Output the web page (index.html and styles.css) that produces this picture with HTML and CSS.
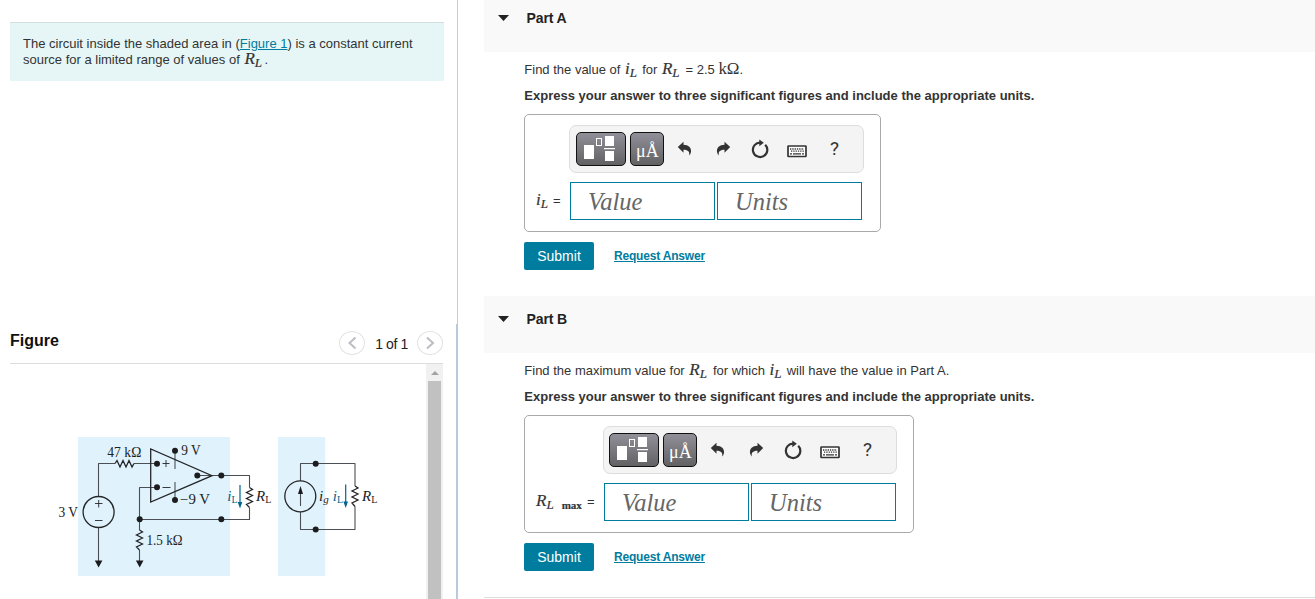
FILE: index.html
```html
<!DOCTYPE html>
<html lang="en">
<head>
<meta charset="utf-8">
<title>Constant current source</title>
<link rel="stylesheet" href="styles.css">
</head>
<body>
<div class="page">
  <aside class="left">
    <div class="intro">The circuit inside the shaded area in (<a href="#">Figure 1</a>) is a constant current<br>source for a limited range of values of <span class="math rl"><i>R</i><sub>L</sub></span>.</div>
    <div class="figure-head">
      <h2>Figure</h2>
      <div class="pager">
        <button class="round"><svg width="10" height="14" viewBox="0 0 10 14"><path d="M8.500 1.500 2.500 7l6 5.500"/></svg></button>
        <span>1 of 1</span>
        <button class="round"><svg width="10" height="14" viewBox="0 0 10 14"><path d="M2 1.500 8 7l-6 5.500"/></svg></button>
      </div>
    </div>
    <div class="figure-body">
      <svg class="circuit" width="340" height="160" viewBox="50 425 340 160">
        <path d="M78 437h152v139H78zM278 437h47.300v139H278z" fill="#e0f3fd"/>
        <g class="wire">
          <path d="M98.500 496.500V463.500H115M134 463.500H157M98.500 528v34M157 487.500H139.500V530M139.500 550V562M139.500 519.500h110V507.500M249.500 487.500V475.500H197M175 451v18M175 482v18M300.500 481V463.500H355V486M355 506.500V529.500H300.500V512M300.500 506v-14"/>
        </g>
        <g class="shape">
          <path d="M115 463.500l2-3 3 6.500 3-6.500 3 6.500 3-6.500 3 6.500 2-3.500M139.500 530l3 2-6 3 6 3-6 3 6 3-6 3 3 3M249.500 487.500l3 2-6 3 6 3-6 3 6 3-6 3 3 3M355 486l3 2-6 3 6 3-6 3 6 3-6 3 3 3.500"/>
          <path d="M150.700 449v53L212 475.700z"/><circle cx="98.600" cy="512" r="15.500"/><circle cx="300.300" cy="496.300" r="15.500"/><path d="M162.500 463.500h7M166 460v7M162.500 487.500h8M95 503.500h7.500M98.700 500v7.500M95 520.500h7.500" stroke-width=".9"/></g>
        <g fill="#1c1c1e"><circle cx="157" cy="463.700" r="3"/><circle cx="157" cy="487.300" r="3"/><circle cx="175" cy="450.700" r="3"/><circle cx="175" cy="500" r="3"/><circle cx="197.300" cy="475.600" r="3"/><circle cx="221.300" cy="475.600" r="3"/><circle cx="221.300" cy="519.300" r="3"/><circle cx="139.700" cy="519.300" r="3"/><circle cx="315.700" cy="463.700" r="3"/><circle cx="315.700" cy="529.400" r="3"/>
          <path d="M94.800 560.500h7.600l-3.800 7zM135.900 560.500h7.600l-3.800 7zM298 494h5l-2.500-8z"/></g>
        <g stroke="#00658d" fill="#00658d"><path d="M240 485v20M345.700 484.500v20" stroke-width="1.200"/><path d="M237.700 502h4.600l-2.300 6.500zM343.400 501.500h4.600l-2.300 6.500z" stroke="none"/></g>
        <g class="label">
          <text x="107.300" y="456.500" textLength="34" lengthAdjust="spacingAndGlyphs">47 kΩ</text>
          <text x="181.300" y="455" textLength="19.500" lengthAdjust="spacingAndGlyphs">9 V</text>
          <text x="180" y="504" textLength="30" lengthAdjust="spacingAndGlyphs">−9 V</text>
          <text x="58.500" y="517" textLength="19.500" lengthAdjust="spacingAndGlyphs">3 V</text>
          <text x="146.500" y="545" textLength="36" lengthAdjust="spacingAndGlyphs">1.5 kΩ</text>
          <text x="256" y="501"><tspan class="it">R</tspan><tspan class="s" dy="2">L</tspan></text>
          <text x="362" y="501"><tspan class="it">R</tspan><tspan class="s" dy="2">L</tspan></text>
          <text x="319" y="501"><tspan class="it">i</tspan><tspan class="s it-sub" dy="2">g</tspan></text>
          <g fill="#00658d"><text x="227.300" y="501"><tspan class="it">i</tspan><tspan class="s" dy="2">L</tspan></text>
          <text x="332.800" y="501"><tspan class="it">i</tspan><tspan class="s" dy="2">L</tspan></text></g>
        </g>
      </svg>
      <div class="scroll"><svg width="8" height="4" viewBox="0 0 8 4"><path d="M0 4 4 0l4 4z" fill="#a3a3a3"/></svg><div class="thumb"></div></div>
    </div>
  </aside>
  <div class="divider"><div class="upper"></div><div class="lower"></div></div>
  <main class="right">
    <section class="part part-a">
      <header><span class="caret"></span><h3>Part A</h3></header>
      <div class="content">
        <p class="question">Find the value of <span class="math il"><i>i</i><sub>L</sub></span> for <span class="math rl"><i>R</i><sub>L</sub></span> = 2.5 <span class="math ohm">kΩ</span>.</p>
        <p class="instruction">Express your answer to three significant figures and include the appropriate units.</p>
        <div class="answer">
          <div class="toolbar">
            <span class="key t1"><svg width="48" height="32" viewBox="1 1 48 32"><path d="M8 13h10v14H8zM29 4h9v10h-9zM29 19h9v10h-9zM28 16h11v1.200H28z" fill="#fff"/><rect x="20.500" y="6.500" width="5" height="7" fill="none" stroke="#fff"/></svg></span>
            <span class="key t2">μÅ</span>
            <svg class="t3" viewBox="0 0 16 16"><path d="M.8 6 6.500.8v3c5 .2 8 3 7.500 7-.2 1.500-.8 2.800-1.700 3.700.3-3.800-.8-5.700-5.800-5.800v3z" fill="#333"/></svg>
            <svg class="t4" viewBox="0 0 16 16"><path d="M.8 6 6.500.8v3c5 .2 8 3 7.500 7-.2 1.500-.8 2.800-1.700 3.700.3-3.800-.8-5.700-5.800-5.800v3z" fill="#333"/></svg>
            <svg class="t5" viewBox="0 0 18 20"><path d="M14.200 5.700A7.200 7.200 0 1 1 9.500 3.600" fill="none" stroke="#333" stroke-width="2.200"/><path d="M8.300.500 12.800 3.800 8.300 7.300z" fill="#333"/></svg>
            <svg class="t6" viewBox="0 0 20 13"><rect x="1" y="1" width="18" height="10.500" rx=".5" fill="#fff" stroke="#333" stroke-width="1.700"/><path d="M3 4h14M4 6.200h13" stroke="#333" stroke-width="1.300" stroke-dasharray="1.300 1"/><path d="M3 8.900h2m1 0h8m1 0h2" stroke="#333" stroke-width="1.300"/></svg>
            <span class="help">?</span>
          </div>
          <div class="fields"><label><span class="math"><i>i</i><sub>L</sub></span> =</label><div class="field">Value</div><div class="field">Units</div></div>
        </div>
        <div class="actions"><button class="submit">Submit</button><a href="#">Request Answer</a></div>
      </div>
    </section>
    <section class="part part-b">
      <header><span class="caret"></span><h3>Part B</h3></header>
      <div class="content">
        <p class="question">Find the maximum value for <span class="math rl"><i>R</i><sub>L</sub></span> for which <span class="math il"><i>i</i><sub>L</sub></span> will have the value in Part A.</p>
        <p class="instruction">Express your answer to three significant figures and include the appropriate units.</p>
        <div class="answer">
          <div class="toolbar">
            <span class="key t1"><svg width="48" height="32" viewBox="1 1 48 32"><path d="M8 13h10v14H8zM29 4h9v10h-9zM29 19h9v10h-9zM28 16h11v1.200H28z" fill="#fff"/><rect x="20.500" y="6.500" width="5" height="7" fill="none" stroke="#fff"/></svg></span>
            <span class="key t2">μÅ</span>
            <svg class="t3" viewBox="0 0 16 16"><path d="M.8 6 6.500.8v3c5 .2 8 3 7.500 7-.2 1.500-.8 2.800-1.700 3.700.3-3.800-.8-5.700-5.800-5.800v3z" fill="#333"/></svg>
            <svg class="t4" viewBox="0 0 16 16"><path d="M.8 6 6.500.8v3c5 .2 8 3 7.500 7-.2 1.500-.8 2.800-1.700 3.700.3-3.800-.8-5.700-5.800-5.800v3z" fill="#333"/></svg>
            <svg class="t5" viewBox="0 0 18 20"><path d="M14.200 5.700A7.200 7.200 0 1 1 9.500 3.600" fill="none" stroke="#333" stroke-width="2.200"/><path d="M8.300.500 12.800 3.800 8.300 7.300z" fill="#333"/></svg>
            <svg class="t6" viewBox="0 0 20 13"><rect x="1" y="1" width="18" height="10.500" rx=".5" fill="#fff" stroke="#333" stroke-width="1.700"/><path d="M3 4h14M4 6.200h13" stroke="#333" stroke-width="1.300" stroke-dasharray="1.300 1"/><path d="M3 8.900h2m1 0h8m1 0h2" stroke="#333" stroke-width="1.300"/></svg>
            <span class="help">?</span>
          </div>
          <div class="fields"><label><span class="math"><i>R</i><sub>L</sub><sub class="max">max</sub></span> =</label><div class="field">Value</div><div class="field">Units</div></div>
        </div>
        <div class="actions"><button class="submit">Submit</button><a href="#">Request Answer</a></div>
      </div>
    </section>
  </main>
</div>
</body>
</html>
```
FILE: styles.css
```css
* { box-sizing: border-box; }
body { margin: 0; height: 599px; overflow: hidden; background: #fff; color: #333; font: 13px/16px "Liberation Sans", Arial, sans-serif; }
h2, h3, p { margin: 0; }
a { color: #007c9e; text-underline-offset: 1px; }
button { font-family: inherit; }
.page { display: flex; height: 599px; }
.left { width: 456px; padding: 22px 13px 0 10px; display: flex; flex-direction: column; }
.intro { height: 59px; width: 434px; padding: 13px; border-top: 1px solid #d3dfdf; background: #e6f6f7; white-space: nowrap; }
.math { display: inline-block; font-family: "Liberation Serif", "Times New Roman", serif; font-size: 17px; line-height: 10px; white-space: nowrap; padding-left: 1px; -webkit-text-stroke: .2px #333; }
.math sub { font-size: 13px; font-style: italic; line-height: 0; vertical-align: -3px; }
.rl { width: 21px; }
.il { width: 14.500px; }
.ohm { width: 21px; padding-left: 0; -webkit-text-stroke: 0; letter-spacing: -.3px; }
.figure-head { height: 283px; padding-top: 249px; display: flex; justify-content: space-between; border-bottom: 1px solid #ddd; width: 433px; }
.figure-head h2 { font-size: 16px; line-height: 21px; color: #111; }
.pager { display: flex; width: 104px; height: 26px; justify-content: space-between; align-items: center; font-size: 14px; }
.pager span { padding: 2px 0 0 1px; white-space: nowrap; color: #222; letter-spacing: -.4px; }
.round { width: 26px; height: 24px; border: 1px solid #e2e2e2; border-radius: 50%; background: #fff; padding: 0; display: flex; align-items: center; justify-content: center; }
.round path { fill: none; stroke: #bbbdc4; stroke-width: 2; }
.figure-body { height: 235px; width: 433px; display: flex; justify-content: space-between; overflow: hidden; }
.circuit { margin: 61px 0 0 40px; flex: none; }
.wire { fill: none; stroke: #4b4f54; stroke-width: 1.100; stroke-linejoin: round; }
.shape { fill: none; stroke: #252629; stroke-width: 1.300; }
.label { font: 14px "Liberation Serif", "Times New Roman", serif; fill: #222; }
.it { font-style: italic; font-size: 15px; }
.s { font-size: 10px; }
.it-sub { font-style: italic; font-size: 11px; }
.scroll { width: 17px; background: #f1f1f1; display: flex; flex-direction: column; align-items: center; padding-top: 7px; }
.thumb { margin-top: 6px; width: 13px; height: 220px; background: #c1c1c1; }
.divider { width: 2px; display: flex; flex-direction: column; align-items: flex-end; }
.upper { width: 1px; height: 324px; background: #c5ccd6; }
.lower { width: 2px; height: 275px; background: #b9cadd; }
.right { width: 857px; padding-left: 26px; }
.part { border-bottom: 1px solid #ddd; }
.part-a { height: 296px; border: 0; }
.part-b { height: 302px; }
.part header { display: flex; height: 52px; padding: 10px 0 0 14px; background: #f9f9f9; }
.part-b header { height: 57px; padding-top: 15px; }
.caret { width: 11px; height: 6px; margin-top: 5px; background: #222; clip-path: polygon(0 0, 100% 0, 50% 100%); }
.part h3 { margin-left: 17.500px; font-size: 14px; line-height: 16px; letter-spacing: -.1px; color: #222; }
.content { padding: 10px 0 0 40.300px; }
.question { height: 16px; white-space: nowrap; }
.instruction { margin-top: 10px; font-weight: bold; }
.answer { width: 357px; height: 118px; margin: 10px 0 0 -.3px; border: 1px solid #a9a9a9; border-radius: 5px; padding: 10px 0 0 11px; }
.part-b .answer { width: 390px; }
.toolbar { display: flex; align-items: flex-start; width: 295px; height: 48px; margin-left: 33px; border: 1px solid #ddd; border-radius: 7px; background: #f4f4f4; padding: 6px 0 0 6px; }
.part-b .toolbar { width: 294px; margin-left: 67px; padding-left: 5px; }
.toolbar svg { display: block; flex: none; }
.key { display: block; flex: none; height: 34px; border: 1px solid #111; border-radius: 5px; background: linear-gradient(#918f98, #626264); color: #fff; }
.t1 { width: 50px; }
.t2 { width: 34px; margin-left: 4px; padding-left: 5px; font: 18px/36px "Liberation Serif", "Times New Roman", serif; }
.t3 { width: 16px; height: 16px; margin: 9px 0 0 13px; }
.t4 { width: 16px; height: 16px; margin: 9px 0 0 22px; transform: scaleX(-1); }
.t5 { width: 18px; height: 20px; margin: 7px 0 0 20px; }
.t6 { width: 20px; height: 13px; margin: 13px 0 0 18px; }
.help { margin: 8px 0 0 23px; font: 19px/18px Roboto, "Liberation Sans", sans-serif; }
.fields { display: flex; gap: 2px; margin-top: 9px; height: 38px; }
.fields label { width: 32px; padding-top: 11px; white-space: nowrap; }
.part-b .fields label { width: 66px; }
.fields .math { font-size: 17px; padding: 0 1.500px 0 0; }
.math .max { margin-left: 8px; font-size: 11px; font-style: normal; font-weight: bold; }
.field { width: 145px; border: 1px solid #007c9e; padding: 5px 0 0 17px; font: italic 24.500px/27px "Liberation Serif", "Times New Roman", serif; color: #666; background: #fff; }
.actions { display: flex; align-items: flex-start; margin: 10px 0 0 -.3px; gap: 20px; }
.submit { width: 70px; height: 28px; border: 0; border-radius: 2px; background: #007c9e; color: #fff; font-size: 14px; padding: 0; }
.actions a { margin-top: 6px; font-size: 12px; font-weight: bold; letter-spacing: -.19px; }
```
